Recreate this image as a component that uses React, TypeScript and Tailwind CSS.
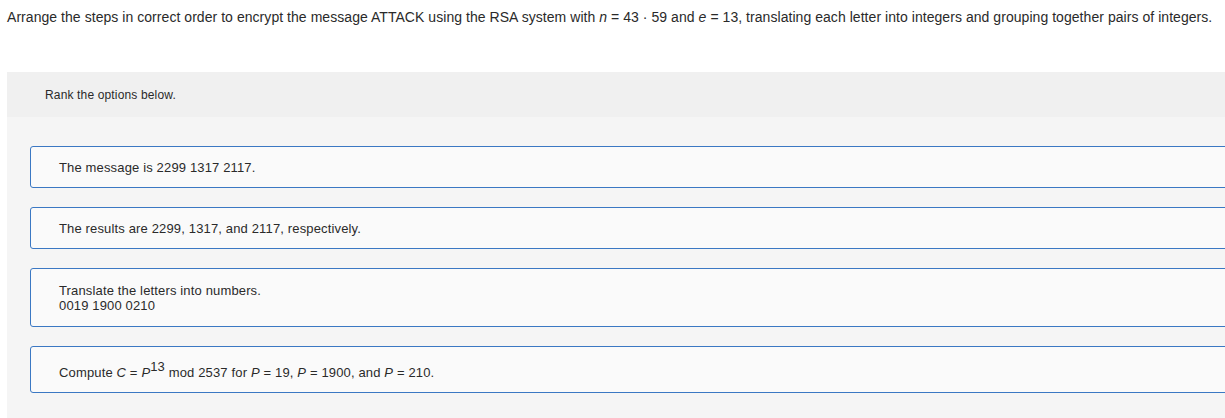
import React from 'react';

const font = { fontFamily: '"Liberation Sans", Arial, sans-serif' };

const Var: React.FC<{ children: React.ReactNode }> = ({ children }) => <i className="italic">{children}</i>;

const Card: React.FC<{ children: React.ReactNode; className?: string }> = ({ children, className }) => (
  <div
    className={
      'w-[1220px] rounded-[3px] border border-[#3b78c3] bg-[#fafafa] pl-[28px] text-[13px] leading-[15px] tracking-[0.15px] text-[#2a2a2a] ' +
      (className ?? '')
    }
  >
    {children}
  </div>
);

export default function App() {
  return (
    <div className="h-[418px] w-[1225px] overflow-hidden bg-white text-[#2a2a2a]" style={font}>
      <p className="whitespace-nowrap pl-[7px] pt-[9px] text-[14px] leading-[16px] tracking-[0.05px]">
        Arrange the steps in correct order to encrypt the message ATTACK using the RSA system with <Var>n</Var> = 43 · 59 and{' '}
        <Var>e</Var> = 13, translating each letter into integers and grouping together pairs of integers.
      </p>

      <div className="ml-[7px] mt-[47px] w-[1240px]">
        <div className="flex h-[45px] items-center bg-[#f0f0f0] pl-[38px] text-[12px] tracking-[0.15px]">
          Rank the options below.
        </div>
        <div className="flex flex-col gap-[19px] bg-[#f5f5f5] pb-[30px] pl-[23px] pt-[29px]">
          <Card className="flex h-[42px] items-center">The message is 2299 1317 2117.</Card>
          <Card className="flex h-[42px] items-center">The results are 2299, 1317, and 2117, respectively.</Card>
          <Card className="flex h-[59px] flex-col justify-center">
            <span>Translate the letters into numbers.</span>
            <span>0019 1900 0210</span>
          </Card>
          <Card className="flex h-[47px] items-center pt-[6px]">
            <span>
              Compute <Var>C</Var> = <Var>P</Var>
              <sup className="-top-[6px] text-[13px]">13</sup> mod 2537 for <Var>P</Var> = 19, <Var>P</Var> = 1900, and{' '}
              <Var>P</Var> = 210.
            </span>
          </Card>
        </div>
      </div>
    </div>
  );
}
